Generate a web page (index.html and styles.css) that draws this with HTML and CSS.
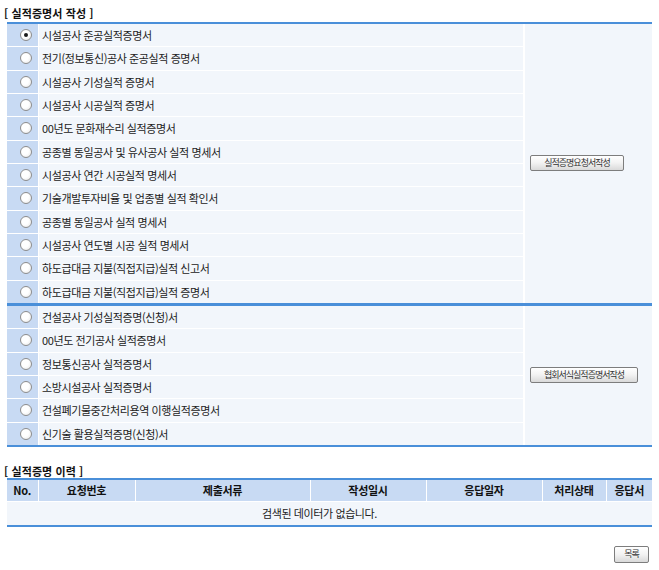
FILE: index.html
```html
<!DOCTYPE html>
<html lang="ko">
<head>
<meta charset="utf-8">
<title>실적증명서 작성</title>
<link rel="stylesheet" href="styles.css">
</head>
<body>
<div class="page">
  <h2 class="sec-title">[ 실적증명서 작성 ]</h2>
  <div class="cert">
    <div class="group g1">
      <div class="rc"><span class="radio checked"></span></div><div class="tc">시설공사 준공실적증명서</div>
      <div class="btn-cell"><button class="btn btn-req">실적증명요청서작성</button></div>
      <div class="rc"><span class="radio"></span></div><div class="tc">전기(정보통신)공사 준공실적 증명서</div>
      <div class="rc"><span class="radio"></span></div><div class="tc">시설공사 기성실적 증명서</div>
      <div class="rc"><span class="radio"></span></div><div class="tc">시설공사 시공실적 증명서</div>
      <div class="rc"><span class="radio"></span></div><div class="tc">00년도 문화재수리 실적증명서</div>
      <div class="rc"><span class="radio"></span></div><div class="tc">공종별 동일공사 및 유사공사 실적 명세서</div>
      <div class="rc"><span class="radio"></span></div><div class="tc">시설공사 연간 시공실적 명세서</div>
      <div class="rc"><span class="radio"></span></div><div class="tc">기술개발투자비율 및 업종별 실적 확인서</div>
      <div class="rc"><span class="radio"></span></div><div class="tc">공종별 동일공사 실적 명세서</div>
      <div class="rc"><span class="radio"></span></div><div class="tc">시설공사 연도별 시공 실적 명세서</div>
      <div class="rc"><span class="radio"></span></div><div class="tc">하도급대금 지불(직접지급)실적 신고서</div>
      <div class="rc"><span class="radio"></span></div><div class="tc">하도급대금 지불(직접지급)실적 증명서</div>
    </div>
    <div class="group g2">
      <div class="rc"><span class="radio"></span></div><div class="tc">건설공사 기성실적증명(신청)서</div>
      <div class="btn-cell"><button class="btn btn-assoc">협회서식실적증명서작성</button></div>
      <div class="rc"><span class="radio"></span></div><div class="tc">00년도 전기공사 실적증명서</div>
      <div class="rc"><span class="radio"></span></div><div class="tc">정보통신공사 실적증명서</div>
      <div class="rc"><span class="radio"></span></div><div class="tc">소방시설공사 실적증명서</div>
      <div class="rc"><span class="radio"></span></div><div class="tc">건설폐기물중간처리용역 이행실적증명서</div>
      <div class="rc"><span class="radio"></span></div><div class="tc">신기술 활용실적증명(신청)서</div>
    </div>
  </div>

  <h2 class="sec-title hist-title">[ 실적증명 이력 ]</h2>
  <table class="hist">
    <colgroup>
      <col class="c-no"><col class="c-req"><col class="c-doc"><col class="c-date"><col class="c-resp"><col class="c-state"><col class="c-ans">
    </colgroup>
    <thead>
      <tr><th>No.</th><th>요청번호</th><th>제출서류</th><th>작성일시</th><th>응답일자</th><th>처리상태</th><th>응답서</th></tr>
    </thead>
    <tbody>
      <tr><td colspan="7" class="empty">검색된 데이터가 없습니다.</td></tr>
    </tbody>
  </table>
  <div class="actions"><button class="btn btn-list">목록</button></div>
</div>
</body>
</html>
```

FILE: styles.css
```css
html, body {
  margin: 0;
  padding: 0;
  background: #fff;
}
body {
  font-family: "Noto Sans CJK KR", "Noto Sans", sans-serif;
  font-size: 11px;
  color: #222;
}
.page {
  width: 645px;
  padding: 0 7px;
}
.sec-title {
  margin: 0 0 2px -3px;
  padding-top: 6px;
  font-size: 11px;
  line-height: 14px;
  font-weight: bold;
  color: #111;
  letter-spacing: 0.1px;
}
.cert {
  border-top: 2px solid #4a8fd9;
  border-bottom: 2px solid #4a8fd9;
}
.group {
  display: grid;
  grid-template-columns: 31px 484px 1fr;
  grid-auto-rows: 22.33px;
  column-gap: 1px;
  row-gap: 1px;
  background: #fff;
}
.g2 {
  border-top: 3px solid #4a8fd9;
}
.rc {
  background: #c8daf3;
  display: flex;
  align-items: center;
  padding-left: 13px;
}
.tc {
  background: #f2f6fb;
  display: flex;
  align-items: center;
  padding-left: 3px;
  letter-spacing: -0.4px;
  color: #222;
  white-space: nowrap;
}
.g1 .btn-cell { grid-column: 3; grid-row: 1 / span 12; }
.g2 .btn-cell { grid-column: 3; grid-row: 1 / span 6; }
.btn-cell {
  background: #f2f6fb;
  display: flex;
  align-items: center;
  padding-left: 5px;
  margin-left: 1px;
}
.radio {
  display: inline-block;
  width: 10px;
  height: 10px;
  border: 1px solid #8d8d8d;
  border-radius: 50%;
  background: radial-gradient(circle at 40% 40%, #ffffff 40%, #e4e4e4 100%);
  position: relative;
  box-sizing: content-box;
}
.radio.checked::after {
  content: "";
  position: absolute;
  left: 3px;
  top: 3px;
  width: 4px;
  height: 4px;
  border-radius: 50%;
  background: #1a1a1a;
}
.btn {
  font-family: "Noto Sans CJK KR", "Noto Sans", sans-serif;
  font-size: 9px;
  letter-spacing: -1px;
  color: #333;
  height: 16px;
  line-height: 14px;
  padding: 0;
  border: 1px solid #7d7d7d;
  border-radius: 2px;
  background: linear-gradient(#ffffff, #f2f2f2 50%, #d9d9d9);
  text-align: center;
  cursor: pointer;
}
.btn-req { width: 94px; }
.btn-assoc { width: 108px; }
.btn-list { width: 35px; height: 17px; }
.hist-title {
  padding-top: 17px;
  margin-bottom: 0;
}
.hist {
  width: 645px;
  table-layout: fixed;
  border-collapse: collapse;
  border-top: 2px solid #4a8fd9;
  border-bottom: 2px solid #4a8fd9;
}
.c-no { width: 31px; }
.c-req { width: 97px; }
.c-doc { width: 175px; }
.c-date { width: 116px; }
.c-resp { width: 116px; }
.c-state { width: 64px; }
.c-ans { width: 46px; }
.hist th {
  background: #c8daf3;
  height: 21px;
  padding: 0;
  font-size: 11px;
  font-weight: bold;
  color: #111;
  letter-spacing: -0.3px;
  border-right: 1px solid #fff;
  border-bottom: 1px solid #fff;
  text-align: center;
}
.hist th:last-child { border-right: none; }
.hist td.empty {
  background: #f2f6fb;
  height: 23px;
  padding: 0 20px 0 0;
  text-align: center;
  color: #222;
  letter-spacing: -0.4px;
}
.actions {
  display: flex;
  justify-content: flex-end;
  padding: 19px 3px 0 0;
}
```
